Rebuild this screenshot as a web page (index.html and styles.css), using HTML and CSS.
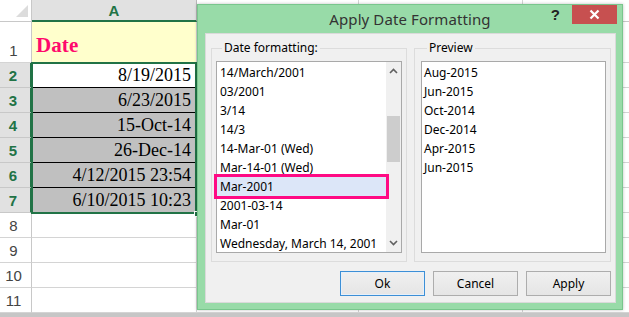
FILE: index.html
```html
<!DOCTYPE html>
<html>
<head>
<meta charset="utf-8">
<link rel="stylesheet" href="styles.css">
</head>
<body>
<div class="screen">
  <div class="sheet">
    <div class="hd corner"><svg width="14" height="14" viewBox="0 0 14 14"><polygon points="13,1 13,13 1,13" fill="#dcdcdc"/></svg></div>
    <div class="hd col sel-col">A</div>
    <div class="hd col"></div>
    <div class="hd col"></div>
    <div class="hd col last"></div>

    <div class="rh">1</div>
    <div class="c title">Date</div><div class="c"></div><div class="c"></div><div class="c last"></div>

    <div class="rh sel-row">2</div>
    <div class="c data white">8/19/2015</div><div class="c"></div><div class="c"></div><div class="c last"></div>

    <div class="rh sel-row">3</div>
    <div class="c data gray">6/23/2015</div><div class="c"></div><div class="c"></div><div class="c last"></div>

    <div class="rh sel-row">4</div>
    <div class="c data gray">15-Oct-14</div><div class="c"></div><div class="c"></div><div class="c last"></div>

    <div class="rh sel-row">5</div>
    <div class="c data gray">26-Dec-14</div><div class="c"></div><div class="c"></div><div class="c last"></div>

    <div class="rh sel-row">6</div>
    <div class="c data gray">4/12/2015 23:54</div><div class="c"></div><div class="c"></div><div class="c last"></div>

    <div class="rh sel-row">7</div>
    <div class="c data gray end">6/10/2015 10:23</div><div class="c"></div><div class="c"></div><div class="c last"></div>

    <div class="rh">8</div>
    <div class="c"></div><div class="c"></div><div class="c"></div><div class="c last"></div>
    <div class="rh">9</div>
    <div class="c"></div><div class="c"></div><div class="c"></div><div class="c last"></div>
    <div class="rh">10</div>
    <div class="c"></div><div class="c"></div><div class="c"></div><div class="c last"></div>
    <div class="rh">11</div>
    <div class="c"></div><div class="c"></div><div class="c"></div><div class="c last"></div>
  </div>
  <div class="shadow"></div>

  <div class="selection"><span class="handle"></span></div>

  <div class="dialog">
    <div class="titlebar">
      <span></span>
      <span class="title">Apply Date Formatting</span>
      <span class="controls"><span class="help">?</span><span class="close"><svg width="11" height="11" viewBox="0 0 11 11"><path d="M1.5 1.5 L9.5 9.5 M9.5 1.5 L1.5 9.5" stroke="#fff" stroke-width="2.2"/></svg></span></span>
    </div>
    <div class="inner">
      <div class="groups">
        <fieldset class="group date-group">
          <legend>Date formatting:</legend>
          <div class="listbox">
            <div class="items">
              <div class="item">14/March/2001</div>
              <div class="item">03/2001</div>
              <div class="item">3/14</div>
              <div class="item">14/3</div>
              <div class="item">14-Mar-01 (Wed)</div>
              <div class="item">Mar-14-01 (Wed)</div>
              <div class="item selected">Mar-2001</div>
              <div class="item">2001-03-14</div>
              <div class="item">Mar-01</div>
              <div class="item">Wednesday, March 14, 2001</div>
            </div>
            <div class="scrollbar">
              <div class="arrow"><svg width="9" height="6" viewBox="0 0 9 6"><path d="M1 5 L4.5 1.5 L8 5" fill="none" stroke="#606060" stroke-width="1.6"/></svg></div>
              <div class="track"><div class="thumb"></div></div>
              <div class="arrow"><svg width="9" height="6" viewBox="0 0 9 6"><path d="M1 1 L4.5 4.5 L8 1" fill="none" stroke="#606060" stroke-width="1.6"/></svg></div>
            </div>
          </div>
        </fieldset>
        <fieldset class="group preview-group">
          <legend>Preview</legend>
          <div class="listbox">
            <div class="items">
              <div class="item">Aug-2015</div>
              <div class="item">Jun-2015</div>
              <div class="item">Oct-2014</div>
              <div class="item">Dec-2014</div>
              <div class="item">Apr-2015</div>
              <div class="item">Jun-2015</div>
            </div>
          </div>
        </fieldset>
      </div>
      <div class="buttons">
        <button class="btn default">Ok</button>
        <button class="btn">Cancel</button>
        <button class="btn">Apply</button>
      </div>
    </div>
  </div>
</div>
</body>
</html>
```

FILE: styles.css
```css
* { box-sizing: border-box; }
html, body { margin: 0; padding: 0; background: #fff; }
.screen {
  position: relative;
  width: 629px;
  height: 317px;
  overflow: hidden;
}
.sheet {
  display: grid;
  grid-template-columns: 32px 165px 162px 164px 106px;
  grid-template-rows: 22px 41px repeat(9, 25px);
  height: 313px;
  overflow: hidden;
  font-family: "Liberation Sans", Arial, sans-serif;
}
.shadow {
  height: 4px;
  background: #c6c6c6;
}
.hd {
  border-right: 1px solid #d4d4d4;
  border-bottom: 1px solid #c8c8c8;
  background: #fff;
}
.corner {
  display: flex;
  align-items: flex-end;
  justify-content: flex-end;
  padding: 0 2px 3px 0;
  border-right-color: #c8c8c8;
}
.hd.col.sel-col {
  background: #e1e1e1;
  color: #217346;
  font-weight: bold;
  font-size: 15px;
  display: flex;
  align-items: center;
  justify-content: center;
  border-bottom: 2px solid #217346;
  border-right-color: #b8b8b8;
}
.rh {
  border-right: 1px solid #c8c8c8;
  border-bottom: 1px solid #d4d4d4;
  color: #444;
  font-size: 15px;
  display: flex;
  align-items: flex-end;
  justify-content: center;
  padding-bottom: 3px;
  padding-right: 4px;
}
.rh.sel-row {
  background: #e1e1e1;
  color: #217346;
  font-weight: bold;
  border-right: 2px solid #217346;
  border-bottom-color: #c8c8c8;
}
.c {
  border-right: 1px solid #d4d4d4;
  border-bottom: 1px solid #d4d4d4;
}
.c.last { border-right: none; }
.hd.last { border-right: none; }
.c.title {
  background: #ffffcc;
  color: #ff0a6c;
  font-family: "Liberation Serif", "Times New Roman", serif;
  font-weight: bold;
  font-size: 21px;
  display: flex;
  align-items: flex-end;
  padding: 0 0 4px 4px;
}
.c.data {
  font-family: "Liberation Serif", "Times New Roman", serif;
  font-size: 18px;
  color: #000;
  display: flex;
  align-items: flex-end;
  justify-content: flex-end;
  padding: 0 5px 1px 0;
  border-bottom: 1px solid #000;
}
.c.white { background: #fff; }
.c.gray { background: #c0c0c0; }
.c.end { border-bottom-color: #d4d4d4; }

.selection {
  position: absolute;
  left: 31px;
  top: 62px;
  width: 166px;
  height: 152px;
  border: 2px solid #217346;
}
.handle {
  position: absolute;
  right: -5px;
  bottom: -5px;
  width: 6px;
  height: 6px;
  background: #217346;
  border: 1px solid #fff;
}

.dialog {
  position: absolute;
  left: 197px;
  top: 4px;
  width: 426px;
  height: 306px;
  background: #98dba8;
  border: 1px solid #79c68d;
  display: flex;
  flex-direction: column;
  font-family: "Noto Sans", "Segoe UI", sans-serif;
  font-size: 12px;
  color: #000;
  box-shadow: 0 0 3px rgba(0,0,0,0.25);
}
.titlebar {
  height: 28px;
  display: grid;
  grid-template-columns: 1fr auto 1fr;
  align-items: start;
}
.title {
  font-size: 15px;
  color: #333;
  padding-top: 4px;
  letter-spacing: 0.1px;
}
.controls {
  display: flex;
  justify-content: flex-end;
  align-items: flex-start;
  padding-right: 5px;
}
.help {
  font-family: "Liberation Sans", Arial, sans-serif;
  font-weight: bold;
  font-size: 15px;
  color: #222;
  margin-right: 12px;
  margin-top: 1px;
}
.close {
  width: 45px;
  height: 19px;
  background: #c75050;
  display: flex;
  align-items: center;
  justify-content: center;
}
.inner {
  margin: 0 6px 6px 7px;
  flex: 1;
  background: #f0f0f0;
  border: 1px solid #dadada;
  display: flex;
  flex-direction: column;
  padding: 6px 4px 6px 5px;
}
.groups {
  display: flex;
  gap: 7px;
  height: 222px;
}
.group {
  margin: 0;
  border: 1px solid #dcdcdc;
  padding: 5px 4px 7px 4px;
  min-width: 0;
  display: block;
}
.date-group { width: 196px; }
.preview-group { flex: 1; padding-left: 6px; }
.group legend {
  padding: 0 2px;
  margin-left: 6px;
  font-size: 12px;
  line-height: 16px;
  color: #000;
}
.listbox {
  height: 192px;
  background: #fff;
  border: 1px solid #a9a9a9;
  display: flex;
}
.items {
  flex: 1;
  padding-top: 1px;
  overflow: visible;
}
.item {
  height: 19px;
  line-height: 19px;
  padding-left: 3px;
  white-space: nowrap;
  color: #000;
}
.preview-group .item { padding-left: 2px; }
.item.selected {
  background: #dce6f8;
  outline: 3px solid #ff0a84;
  outline-offset: 0;
  position: relative;
}
.scrollbar {
  width: 15px;
  background: #f0f0f0;
  display: flex;
  flex-direction: column;
}
.arrow {
  height: 18px;
  display: flex;
  align-items: center;
  justify-content: center;
}
.track {
  flex: 1;
  padding: 36px 1px 0 1px;
}
.thumb {
  height: 46px;
  background: #cdcdcd;
}
.buttons {
  display: flex;
  justify-content: flex-end;
  gap: 8px;
  margin-top: 9px;
}
.btn {
  width: 85px;
  height: 25px;
  font-family: "Noto Sans", "Segoe UI", sans-serif;
  font-size: 12px;
  color: #000;
  background: linear-gradient(#f0f0f0, #e5e5e5);
  border: 1px solid #adadad;
  padding: 0;
}
.btn.default {
  border: 1px solid #3c8fd6;
  box-shadow: inset 0 0 0 1px #e6f0fa;
}
```
